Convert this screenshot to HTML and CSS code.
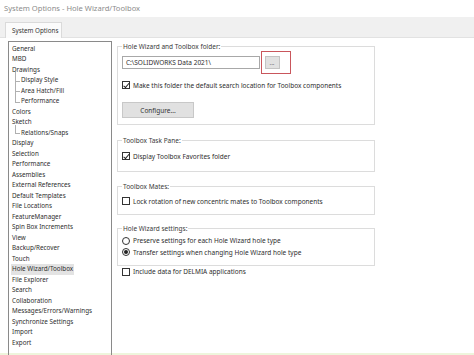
FILE: index.html
```html
<!DOCTYPE html>
<html lang="en">
<head>
  <meta charset="UTF-8" />
  <title>System Options - Hole Wizard/Toolbox</title>
  <link rel="stylesheet" href="styles.css">
</head>
<body>
  <div class="titlebar">System Options - Hole Wizard/Toolbox</div>

  <div class="tabstrip">
    <div class="tab">System Options</div>
  </div>

  <div class="panel">
    <ul class="tree">
      <li>General</li>
      <li>MBD</li>
      <li>Drawings</li>
      <li class="child">Display Style</li>
      <li class="child">Area Hatch/Fill</li>
      <li class="child last">Performance</li>
      <li>Colors</li>
      <li>Sketch</li>
      <li class="child last">Relations/Snaps</li>
      <li>Display</li>
      <li>Selection</li>
      <li>Performance</li>
      <li>Assemblies</li>
      <li>External References</li>
      <li>Default Templates</li>
      <li>File Locations</li>
      <li>FeatureManager</li>
      <li>Spin Box Increments</li>
      <li>View</li>
      <li>Backup/Recover</li>
      <li>Touch</li>
      <li><span class="selected">Hole Wizard/Toolbox</span></li>
      <li>File Explorer</li>
      <li>Search</li>
      <li>Collaboration</li>
      <li>Messages/Errors/Warnings</li>
      <li>Synchronize Settings</li>
      <li>Import</li>
      <li>Export</li>
    </ul>

    <div class="settings">
      <fieldset class="group folder">
        <legend>Hole Wizard and Toolbox folder:</legend>
        <div class="path-row">
          <div class="path">C:\SOLIDWORKS Data 2021\</div>
          <div class="marked">
            <button class="browse">...</button>
          </div>
        </div>
        <label class="option">
          <span class="check on"></span>
          Make this folder the default search location for Toolbox components
        </label>
        <button class="configure">Configure...</button>
      </fieldset>

      <fieldset class="group pane">
        <legend>Toolbox Task Pane:</legend>
        <label class="option">
          <span class="check on"></span>
          Display Toolbox Favorites folder
        </label>
      </fieldset>

      <fieldset class="group mates">
        <legend>Toolbox Mates:</legend>
        <label class="option">
          <span class="check"></span>
          Lock rotation of new concentric mates to Toolbox components
        </label>
      </fieldset>

      <fieldset class="group hole">
        <legend>Hole Wizard settings:</legend>
        <label class="option">
          <span class="radio"></span>
          Preserve settings for each Hole Wizard hole type
        </label>
        <label class="option">
          <span class="radio on"></span>
          Transfer settings when changing Hole Wizard hole type
        </label>
      </fieldset>

      <label class="option loose">
        <span class="check"></span>
        Include data for DELMIA applications
      </label>
    </div>
  </div>
</body>
</html>
```

FILE: styles.css
```css
* {
  margin: 0;
  padding: 0;
  box-sizing: border-box;
}

body {
  font-family: "Noto Sans", "Open Sans", sans-serif;
  font-size: 6.3px;
  color: #2e2e2e;
  background-color: #ffffff;
  height: 355px;
  overflow: hidden;
}

.titlebar {
  height: 17px;
  padding: 3px 4px 0;
  font-size: 7.6px;
  color: #8c8c8c;
}

.tabstrip {
  height: 21px;
  background-color: #f0f0f0;
  padding: 5px 0 0 5px;
  border-bottom: 1px solid #e2e2e2;
}

.tab {
  width: 57px;
  height: 16px;
  background-color: #fbfbfb;
  border: 1px solid #dadada;
  border-bottom: none;
  padding: 3px 0 0 6px;
  color: #333;
}

.panel {
  display: flex;
  gap: 5px;
  padding: 3px 0 0 8px;
  border-bottom: 2px solid #eef5dc;
  height: 317px;
}

.tree {
  list-style: none;
  width: 104px;
  height: 330px;
  border: 1px solid #8a8a8a;
  padding: 1.5px 0 0 3px;
}

.tree li {
  height: 10.5px;
  line-height: 10.5px;
  white-space: nowrap;
  position: relative;
}

.tree .child {
  padding-left: 9px;
}

/* tree connector lines */
.tree .child::before {
  content: "";
  position: absolute;
  left: 3px;
  top: -3px;
  width: 4px;
  height: 8.5px;
  border-left: 1px solid #b0b0b0;
  border-bottom: 1px solid #b0b0b0;
}

.tree .child::after {
  content: "";
  position: absolute;
  left: 3px;
  top: 5px;
  height: 5.5px;
  border-left: 1px solid #b0b0b0;
}

.tree .child.last::after {
  display: none;
}

.selected {
  display: inline-block;
  background-color: #e3e3e3;
  padding: 0 1px;
  margin-left: -1px;
}

.settings {
  width: 258px;
  padding-top: 1px;
  font-size: 6.5px;
}

.group {
  border: 1px solid #dcdcdc;
  padding: 0 4px 8px;
}

.group legend {
  padding: 0 1px;
  line-height: 9px;
  color: #3a3a3a;
}

.path-row {
  display: flex;
  align-items: center;
}

.path {
  width: 138px;
  height: 13px;
  border: 1px solid #a8a8a8;
  line-height: 11px;
  padding-left: 3px;
}

.marked {
  border: 1.5px solid #c9565c;
  padding: 4px 10px 4px 2.5px;
  margin-left: 1px;
}

.browse {
  display: block;
  width: 15px;
  height: 13px;
  background-color: #e1e1e1;
  border: 1px solid #c4c4c4;
  font-family: inherit;
  font-size: 6px;
  line-height: 8px;
  color: #444;
}

.option {
  display: flex;
  align-items: center;
  gap: 3px;
  height: 10px;
  margin-top: 5px;
  white-space: nowrap;
}

.folder {
  padding-bottom: 6px;
}

.folder .option {
  margin-top: 6px;
}

.pane {
  margin-top: 11px;
  padding-bottom: 10px;
}

.pane .option {
  margin-top: 6px;
}

.mates {
  margin-top: 10px;
  padding-bottom: 8px;
}

.mates .option {
  margin-top: 5px;
}

.hole {
  margin-top: 9px;
  padding-bottom: 7.5px;
}

.hole .option {
  margin-top: 1.5px;
}

.hole .option:first-of-type {
  margin-top: 2.5px;
}

.check {
  width: 8px;
  height: 8px;
  border: 1px solid #333;
  background-color: #fff;
  position: relative;
}

.check.on::after {
  content: "";
  position: absolute;
  left: 2px;
  top: 0;
  width: 2px;
  height: 4.5px;
  border-right: 1px solid #222;
  border-bottom: 1px solid #222;
  transform: rotate(40deg);
}

.radio {
  width: 8px;
  height: 8px;
  border: 1px solid #333;
  border-radius: 50%;
  background-color: #fff;
  position: relative;
}

.radio.on::after {
  content: "";
  position: absolute;
  left: 1px;
  top: 1px;
  width: 4px;
  height: 4px;
  border-radius: 50%;
  background-color: #222;
}

.configure {
  display: block;
  width: 72px;
  height: 16px;
  margin-top: 12px;
  background-color: #e1e1e1;
  border: 1px solid #c8c8c8;
  font-family: inherit;
  font-size: 6.5px;
  color: #333;
}

.loose {
  margin-top: 1px;
  padding-left: 5px;
}
```
